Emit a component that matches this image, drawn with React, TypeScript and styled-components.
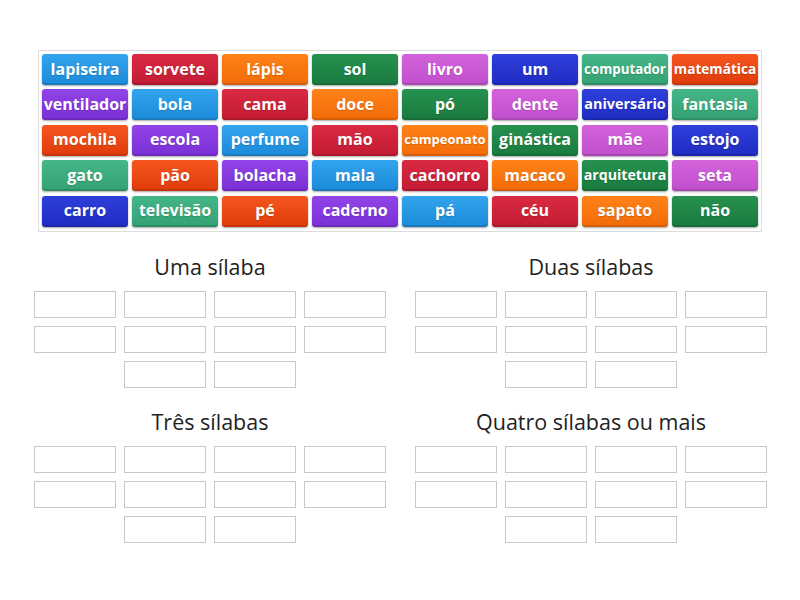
import React from 'react';
import styled, { createGlobalStyle } from 'styled-components';

const GlobalStyle = createGlobalStyle`
  html, body {
    margin: 0;
    padding: 0;
    background: #ffffff;
    font-family: 'Open Sans', 'Noto Sans', sans-serif;
  }
`;

const palette = [
  ['#33a4ee', '#1b8ad9'], // blue
  ['#da2a42', '#c21b33'], // red
  ['#ff8219', '#f26b06'], // orange
  ['#26914f', '#1a7a3f'], // dark green
  ['#d363db', '#c04fcc'], // pink
  ['#2e3fda', '#1f2cc2'], // navy
  ['#45b688', '#33a173'], // teal
  ['#f5561e', '#de3c0b'], // orange red
  ['#9144e8', '#7a30d5'], // purple
];

const words: { text: string; size?: number }[] = [
  { text: 'lapiseira' },
  { text: 'sorvete' },
  { text: 'lápis' },
  { text: 'sol' },
  { text: 'livro' },
  { text: 'um' },
  { text: 'computador', size: 13.3 },
  { text: 'matemática', size: 13.6 },
  { text: 'ventilador' },
  { text: 'bola' },
  { text: 'cama' },
  { text: 'doce' },
  { text: 'pó' },
  { text: 'dente' },
  { text: 'aniversário', size: 14.4 },
  { text: 'fantasia' },
  { text: 'mochila' },
  { text: 'escola' },
  { text: 'perfume' },
  { text: 'mão' },
  { text: 'campeonato', size: 13 },
  { text: 'ginástica' },
  { text: 'mãe' },
  { text: 'estojo' },
  { text: 'gato' },
  { text: 'pão' },
  { text: 'bolacha' },
  { text: 'mala' },
  { text: 'cachorro' },
  { text: 'macaco' },
  { text: 'arquitetura', size: 14.2 },
  { text: 'seta' },
  { text: 'carro' },
  { text: 'televisão' },
  { text: 'pé' },
  { text: 'caderno' },
  { text: 'pá' },
  { text: 'céu' },
  { text: 'sapato' },
  { text: 'não' },
];

const groups = ['Uma sílaba', 'Duas sílabas', 'Três sílabas', 'Quatro sílabas ou mais'];

const Page = styled.div`
  width: 800px;
  padding-top: 50px;
  box-sizing: border-box;
`;

const Board = styled.div`
  width: 724px;
  margin-left: 38px;
  box-sizing: border-box;
  border: 1px solid #dcdcdc;
  padding: 3px 3px 4px;
  display: grid;
  grid-template-columns: repeat(8, 86px);
  grid-auto-rows: 31px;
  column-gap: 4px;
  row-gap: 4.4px;
`;

const Tile = styled.div<{ $top: string; $bottom: string; $size: number }>`
  display: flex;
  align-items: center;
  justify-content: center;
  padding-bottom: 2px;
  box-sizing: border-box;
  border-radius: 3px;
  background: linear-gradient(to bottom, ${(p) => p.$top}, ${(p) => p.$bottom});
  box-shadow: 0 1px 2px rgba(0, 0, 0, 0.35), inset 0 -2px 0 rgba(0, 0, 0, 0.12);
  color: #fff;
  font-weight: 700;
  font-size: ${(p) => p.$size}px;
  white-space: nowrap;
  text-shadow: 0 1px 1px rgba(0, 0, 0, 0.15);
`;

const Groups = styled.div`
  display: grid;
  grid-template-columns: 352px 352px;
  column-gap: 29px;
  row-gap: 22px;
  margin: 23px 0 0 34px;
`;

const Group = styled.div`
  display: flex;
  flex-direction: column;
  gap: 12px;
`;

const GroupTitle = styled.div`
  text-align: center;
  font-size: 21.5px;
  line-height: 24px;
  color: #222;
`;

const Slots = styled.div`
  display: flex;
  flex-wrap: wrap;
  justify-content: center;
  gap: 8px;
`;

const Slot = styled.div`
  width: 82px;
  height: 27px;
  box-sizing: border-box;
  border: 1px solid #c8c8c8;
  background: #fff;
`;

export default function App() {
  return (
    <Page>
      <GlobalStyle />
      <Board>
        {words.map((w, i) => {
          const [top, bottom] = palette[i % palette.length];
          return (
            <Tile key={w.text} $top={top} $bottom={bottom} $size={w.size ?? 16}>
              {w.text}
            </Tile>
          );
        })}
      </Board>
      <Groups>
        {groups.map((g) => (
          <Group key={g}>
            <GroupTitle>{g}</GroupTitle>
            <Slots>
              {Array.from({ length: 10 }).map((_, i) => (
                <Slot key={i} />
              ))}
            </Slots>
          </Group>
        ))}
      </Groups>
    </Page>
  );
}
